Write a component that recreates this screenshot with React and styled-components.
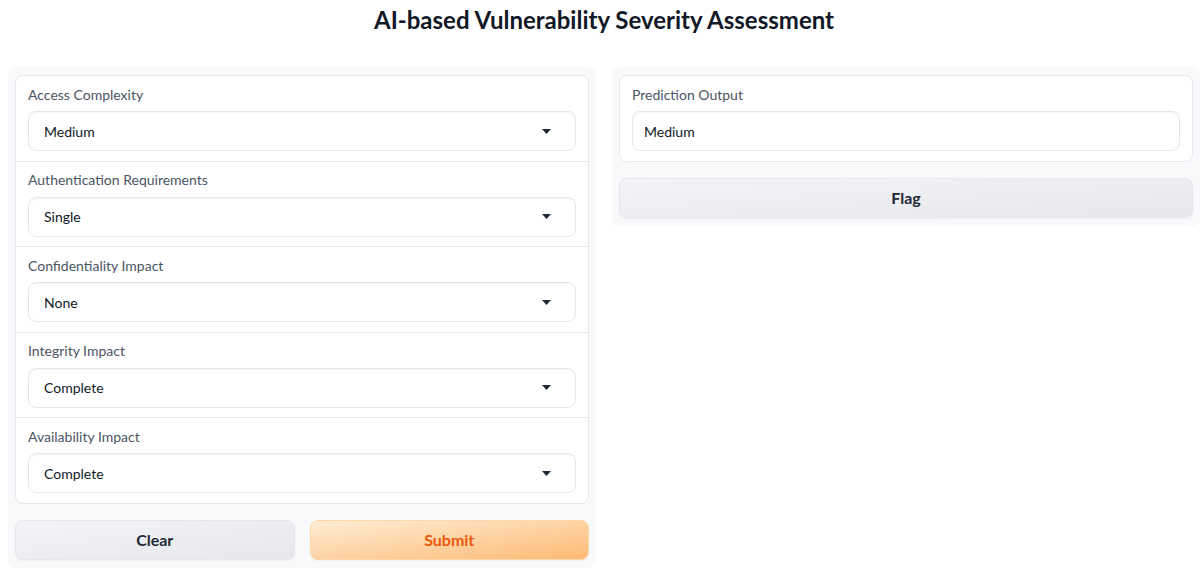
import React from 'react';
import styled, { createGlobalStyle } from 'styled-components';

const Global = createGlobalStyle`
  body {
    margin: 0;
    background: #ffffff;
    font-family: "Lato", "Open Sans", sans-serif;
    color: #1f2937;
  }
`

const Page = styled.div`
  padding: 0 0 0 8px;
  width: 1192px;
`

const Title = styled.h1`
  margin: 0;
  padding-top: 4px;
  height: 67px;
  box-sizing: border-box;
  text-align: center;
  font-size: 24px;
  line-height: 32px;
  font-weight: 700;
  color: #111827;
`

const Columns = styled.div`
  display: grid;
  grid-template-columns: 588px 588px;
  gap: 16px;
  align-items: start;
`

const Panel = styled.div`
  background: #f8f9fb;
  border-radius: 8px;
  padding: 8px 7px;
  display: flex;
  flex-direction: column;
  gap: 16px;
`

const Form = styled.div`
  background: #ffffff;
  border: 1px solid #e5e7eb;
  border-radius: 8px;
  overflow: hidden;
`

const Block = styled.div`
  padding: 8.5px 12px 9.5px;
  & + & {
    border-top: 1px solid #e5e7eb;
  }
`

const Label = styled.div`
  font-size: 14px;
  line-height: 20px;
  color: #4b5563;
  margin-bottom: 6.5px;
`

const Field = styled.div`
  height: 40px;
  box-sizing: border-box;
  border: 1px solid #e5e7eb;
  border-radius: 8px;
  box-shadow: inset 0 1px 2px rgba(0, 0, 0, 0.04);
  display: flex;
  align-items: center;
  justify-content: space-between;
  padding: 0 24px 0 ${p => p.$pad || 15}px;
  font-size: 14px;
  color: #111827;
`

const Buttons = styled.div`
  display: grid;
  grid-template-columns: 1fr 1fr;
  gap: 15px;
`

const Button = styled.button`
  height: 40px;
  border-radius: 8px;
  font-family: inherit;
  font-size: 16px;
  font-weight: 700;
  cursor: pointer;
  border: 1px solid ${p => (p.$primary ? '#fed7aa' : '#e5e7eb')};
  color: ${p => (p.$primary ? '#ea580c' : '#1f2937')};
  background: ${p =>
    p.$primary
      ? 'linear-gradient(to bottom right, #ffedd5, #fdba74)'
      : 'linear-gradient(to bottom right, #f3f4f6, #e5e7eb)'};
  box-shadow: 0 1px 2px rgba(0, 0, 0, 0.05);
`

const Caret = () => (
  <svg width="9" height="5" viewBox="0 0 9 5">
    <path d="M0 0 L9 0 L4.5 5 Z" fill="#1f2937" />
  </svg>
)

const fields = [
  ['Access Complexity', 'Medium'],
  ['Authentication Requirements', 'Single'],
  ['Confidentiality Impact', 'None'],
  ['Integrity Impact', 'Complete'],
  ['Availability Impact', 'Complete'],
]

export default function App() {
  return (
    <Page>
      <Global />
      <Title>AI-based Vulnerability Severity Assessment</Title>
      <Columns>
        <Panel>
          <Form>
            {fields.map(([label, value]) => (
              <Block key={label}>
                <Label>{label}</Label>
                <Field>
                  <span>{value}</span>
                  <Caret />
                </Field>
              </Block>
            ))}
          </Form>
          <Buttons>
            <Button>Clear</Button>
            <Button $primary>Submit</Button>
          </Buttons>
        </Panel>
        <Panel>
          <Form>
            <Block>
              <Label>Prediction Output</Label>
              <Field $pad={11}>
                <span>Medium</span>
              </Field>
            </Block>
          </Form>
          <Button>Flag</Button>
        </Panel>
      </Columns>
    </Page>
  )
}
